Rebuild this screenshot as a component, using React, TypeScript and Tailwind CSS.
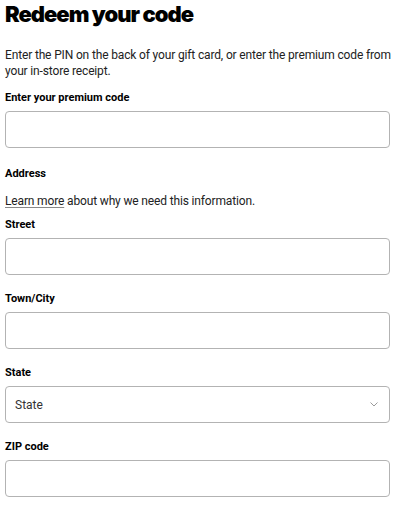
import React from "react";

function Field({ label, children }: { label: string; children?: React.ReactNode }) {
  return (
    <div className="flex flex-col gap-[4px]">
      <label className="text-[11px] leading-[18px] font-bold text-black">{label}</label>
      {children ?? (
        <input
          type="text"
          className="h-[37px] w-full rounded-[4px] border border-[#b3b3b3] bg-white px-3 text-[12px] outline-none"
        />
      )}
    </div>
  );
}

export default function App() {
  return (
    <div
      className="min-h-[507px] w-[400px] bg-white pl-[5px] pr-[10px] text-[#222]"
      style={{ fontFamily: "Roboto, 'Liberation Sans', sans-serif" }}
    >
      <h1
        className="text-[22px] leading-[28px] font-black tracking-[-1px] text-black"
        style={{ fontFamily: "Inter, 'Noto Sans', sans-serif" }}
      >
        Redeem your code
      </h1>
      <p className="mr-[-6px] mt-[19px] text-[12px] leading-[16px] tracking-[-0.15px] text-[#222]">
        Enter the PIN on the back of your gift card, or enter the premium code from your in-store receipt.
      </p>
      <div className="mt-[10px]">
        <Field label="Enter your premium code" />
      </div>
      <div className="mt-[17px] text-[11px] leading-[18px] font-bold text-black">Address</div>
      <p className="mt-[10px] text-[12px] leading-[17px] tracking-[-0.15px] text-[#222]">
        <a href="#" className="underline decoration-[#888] underline-offset-2">Learn more</a> about why we need this information.
      </p>
      <div className="mt-[6px] flex flex-col gap-[15px]">
        <Field label="Street" />
        <Field label="Town/City" />
        <Field label="State">
          <div className="flex h-[37px] w-full items-center justify-between rounded-[4px] border border-[#b3b3b3] bg-white pl-[9px] pr-[11px]">
            <span className="text-[12px] text-[#333]">State</span>
            <svg width="8" height="5" viewBox="0 0 8 5" fill="none">
              <path d="M0.5 0.5 L4 4 L7.5 0.5" stroke="#9a9a9a" strokeWidth="1" />
            </svg>
          </div>
        </Field>
        <Field label="ZIP code" />
      </div>
    </div>
  );
}
